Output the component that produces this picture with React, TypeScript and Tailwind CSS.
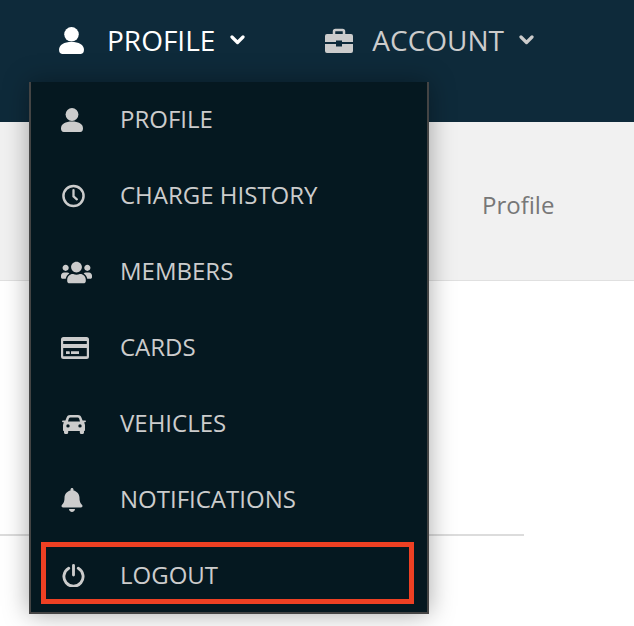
import { useState } from "react";
import { FaBell, FaUsers } from "react-icons/fa";

const PersonIcon = ({ className }: { className?: string }) => (
  <svg viewBox="0 0 24 26" className={className} fill="currentColor">
    <circle cx="12" cy="7" r="7" />
    <path d="M0 22c0-5 5-7.500 12-7.500S24 17 24 22c0 2.500-1 4-3 4H3c-2 0-3-1.500-3-4z" />
  </svg>
);

const ClockIcon = ({ className }: { className?: string }) => (
  <svg viewBox="0 0 24 24" className={className} fill="none" stroke="currentColor">
    <circle cx="12" cy="12" r="10.500" strokeWidth="2.600" />
    <path d="M12 6v6.500l3.500 3" strokeWidth="2.400" strokeLinecap="round" strokeLinejoin="round" />
  </svg>
);

const CardIcon = ({ className }: { className?: string }) => (
  <svg viewBox="0 0 28 22" className={className} fill="currentColor">
    <path
      fillRule="evenodd"
      d="M2.500 0h23A2.500 2.500 0 0 1 28 2.500v17a2.500 2.500 0 0 1-2.500 2.500h-23A2.500 2.500 0 0 1 0 19.500v-17A2.500 2.500 0 0 1 2.500 0zM2.200 4v3h23.600V4zm0 7v8.200h23.600V11zM5 14.500h3.500V17H5zm5 0h8V17h-8z"
    />
    <path d="M5 14.500h3.500V17H5zM10 14.500h8V17h-8z" />
  </svg>
);

const BriefcaseIcon = ({ className }: { className?: string }) => (
  <svg viewBox="0 0 28 25" className={className} fill="currentColor">
    <path d="M9 7V3.500A1.500 1.500 0 0 1 10.500 2h7A1.500 1.500 0 0 1 19 3.500V7" fill="none" stroke="currentColor" strokeWidth="2.500" />
    <path d="M2 6h24a2 2 0 0 1 2 2v6H17v-1.500h-6V14H0V8a2 2 0 0 1 2-2z" />
    <path d="M0 16h11v2.500h6V16h11v7a2 2 0 0 1-2 2H2a2 2 0 0 1-2-2z" />
  </svg>
);

const CarIcon = ({ className }: { className?: string }) => (
  <svg viewBox="0 0 24 19" className={className} fill="currentColor">
    <path
      fillRule="evenodd"
      d="M8 0h8c1.600 0 2.700.8 3.300 2.200L20.600 5.500H23c.6 0 1 .4 1 .8s-.4.900-1 1l-1 .3c.6.8 1 1.700 1 2.700v4.700c0 .6-.4 1-1 1v1.500c0 .8-.6 1.500-1.500 1.500h-1.200c-.9 0-1.500-.7-1.500-1.500V16H6.200v1.500c0 .8-.6 1.500-1.500 1.500H3.500C2.600 19 2 18.300 2 17.500V16c-.6 0-1-.4-1-1v-4.700c0-1 .4-1.900 1-2.700l-1-.3c-.6-.1-1-.5-1-1s.4-.8 1-.8h2.400l1.300-3.300C5.300.8 6.400 0 8 0zm.4 2.500c-.7 0-1.200.3-1.500 1L6 6.500h12l-.9-3c-.3-.7-.8-1-1.500-1zM6 9.200a1.700 1.700 0 1 0 0 3.400 1.700 1.700 0 0 0 0-3.400zm12 0a1.700 1.700 0 1 0 0 3.400 1.700 1.700 0 0 0 0-3.400z"
    />
  </svg>
);

const PowerIcon = ({ className }: { className?: string }) => (
  <svg viewBox="0 0 24 24" className={className} fill="none" stroke="currentColor" strokeWidth="3" strokeLinecap="round">
    <path d="M7 4.500a10 10 0 1 0 10 0" />
    <path d="M12 1.500v10" />
  </svg>
);

const ChevronIcon = ({ className }: { className?: string }) => (
  <svg viewBox="0 0 15 10" className={className} fill="none" stroke="currentColor" strokeWidth="3.200" strokeLinecap="round" strokeLinejoin="round">
    <path d="M2 2l5.500 5.500L13 2" />
  </svg>
);

const items = [
  { label: "PROFILE", icon: <PersonIcon className="w-[22px] h-[24px]" /> },
  { label: "CHARGE HISTORY", icon: <ClockIcon className="ml-[1px] w-[23px] h-[24px]" /> },
  { label: "MEMBERS", icon: <FaUsers className="w-[31px] h-[25px]" /> },
  { label: "CARDS", icon: <CardIcon className="w-[28px] h-[22px]" /> },
  { label: "VEHICLES", icon: <CarIcon className="ml-[1px] w-[24px] h-[19px]" /> },
  { label: "NOTIFICATIONS", icon: <FaBell className="w-[22px] h-[24px]" /> },
  { label: "LOGOUT", icon: <PowerIcon className="ml-[1px] -mt-[2px] w-[23px] h-[23px]" /> },
];

export default function App() {
  const [open] = useState(true);

  return (
    <div className="relative h-[626px] w-[634px] overflow-hidden bg-white font-['Open_Sans',sans-serif]">
      <header className="h-[122px] bg-[#0e2a3a] shadow-sm">
        <nav className="flex items-center h-[80px] text-[28px]">
          <div className="flex items-center ml-[59px] text-white">
            <PersonIcon className="w-[25px] h-[27px]" />
            <span className="ml-[23px]">PROFILE</span>
            <ChevronIcon className="ml-[15px] w-[15px] h-[10px]" />
          </div>
          <div className="flex items-center ml-[79px] text-[#cccccc]">
            <BriefcaseIcon className="ml-[1px] w-[28px] h-[25px]" />
            <span className="ml-[19px]">ACCOUNT</span>
            <ChevronIcon className="ml-[15px] w-[15px] h-[10px]" />
          </div>
        </nav>
      </header>

      <div className="h-[159px] bg-[#f1f1f1] border-b border-[#e0e0e0] flex items-center pl-[482px] pt-2 text-[24px] text-[#777777]">
        Profile
      </div>

      <div className="mt-[253px] h-[2px] w-[524px] bg-[#dcdcdc]" />

      {open && (
        <ul className="absolute left-[29px] top-[82px] w-[400px] h-[532px] bg-[#051820] border-x-2 border-b-2 border-[#444444] shadow-[0_0_24px_rgba(0,0,0,0.35)]">
          {items.map((item) => (
            <li key={item.label} className="flex items-center h-[76px] text-[24px] text-[#cccccc]">
              <span className="flex items-center w-[89px] pl-[30px]">{item.icon}</span>
              <span className="-mt-[2px]">{item.label}</span>
            </li>
          ))}
          <li className="absolute left-[10px] top-[460px] w-[373px] h-[62px] border-[5px] border-[#ee4023]" />
        </ul>
      )}
    </div>
  );
}
